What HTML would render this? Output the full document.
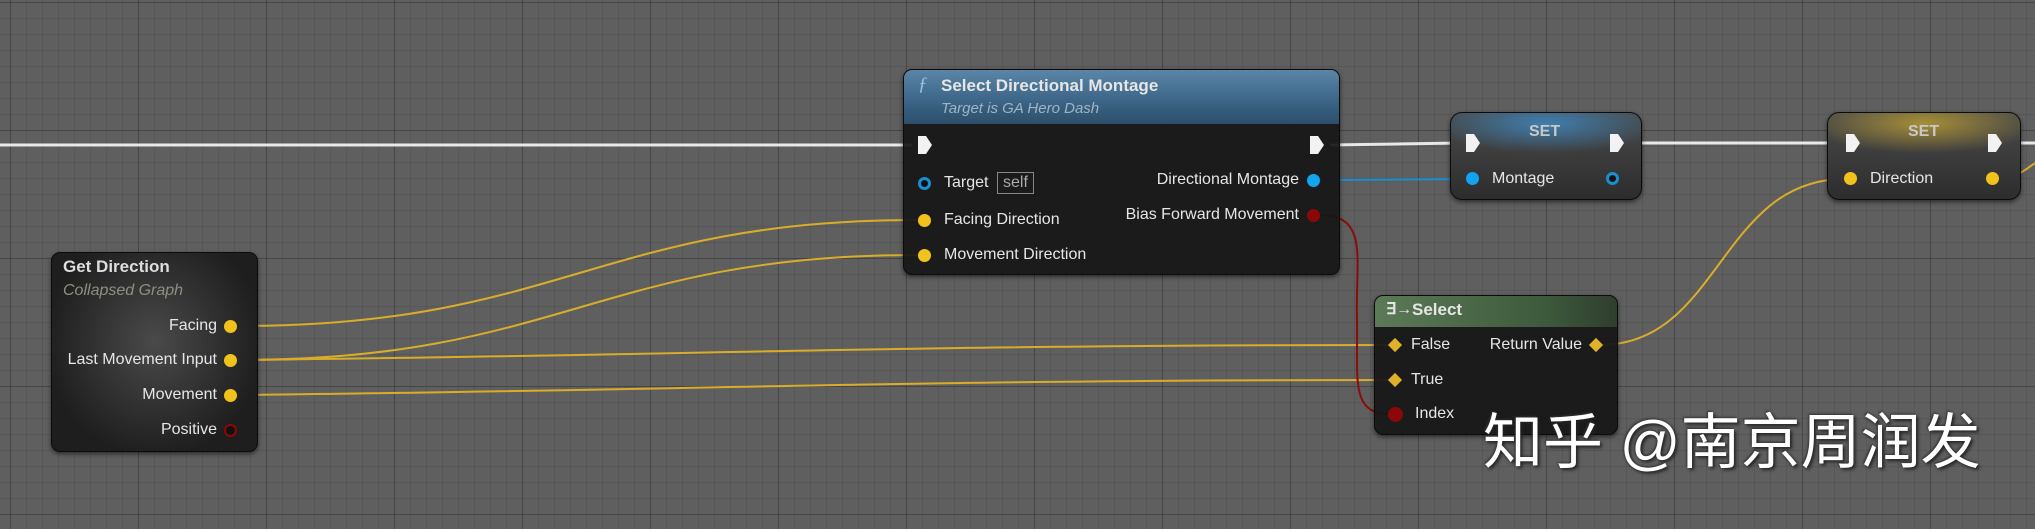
<!DOCTYPE html>
<html><head><meta charset="utf-8"><style>
*{margin:0;padding:0;box-sizing:border-box}
body{width:2035px;height:529px;overflow:hidden;position:relative;font-family:"Liberation Sans",sans-serif;color:#e6e6e6;
background-color:#5f5f5f;
background-image:
linear-gradient(to right,rgba(45,45,45,.4) 1px,transparent 1px),
linear-gradient(to bottom,rgba(45,45,45,.4) 1px,transparent 1px),
linear-gradient(to right,rgba(75,75,75,.4) 1px,transparent 1px),
linear-gradient(to bottom,rgba(75,75,75,.4) 1px,transparent 1px);
background-size:128px 128px,128px 128px,16px 16px,16px 16px;background-position:10px 2px,10px 2px,10px 2px,10px 2px}
svg.w{position:absolute;left:0;top:0}
.n{position:absolute;border-radius:9px;background:rgba(22,22,22,.93);border:1px solid #0b0b0b;box-shadow:0 2px 5px rgba(0,0,0,.55)}
.t{position:absolute;font-size:16px;white-space:nowrap;line-height:18px}
.b{font-weight:bold}
.i{font-style:italic}
.p{position:absolute;width:13px;height:13px;border-radius:50%}
.y{background:#f2c21c}.bl{background:#12a4ef}.r{background:#8c0808}
.d{position:absolute;width:10px;height:10px;background:#e0b22a;transform:rotate(45deg)}
</style></head><body>
<svg class="w" width="2035" height="529">
<g fill="none" stroke-width="2">
<path d="M0 145 L912 145" stroke="#e8e8e8" stroke-width="3"/>
<path d="M1330 145 L1460 143" stroke="#e8e8e8" stroke-width="3"/>
<path d="M1630 143 L1840 143" stroke="#e8e8e8" stroke-width="3"/>
<path d="M2005 143 L2035 143" stroke="#e8e8e8" stroke-width="3"/>
<path d="M238 326 C560 326 600 220 918 220" stroke="#d9ad2a"/>
<path d="M238 360 C560 360 600 255 918 255" stroke="#d9ad2a"/>
<path d="M238 360 C700 355 900 345 1390 345" stroke="#d9ad2a"/>
<path d="M238 395 C700 390 900 380 1390 380" stroke="#d9ad2a"/>
<path d="M1320 180 L1467 179" stroke="#1690d0"/>
<path d="M1320 215 C1370 215 1355 260 1357 320 C1358 380 1350 414 1390 414" stroke="#8a0c0c"/>
<path d="M1600 345 C1720 345 1720 179 1845 179" stroke="#d9ad2a"/>
<path d="M1998 179 C2015 179 2025 170 2035 163" stroke="#d9ad2a"/>
</g></svg>

<!-- Get Direction -->
<div class="n" style="left:51px;top:252px;width:207px;height:200px;background:radial-gradient(ellipse at 50% 45%,#4a4a4a,#1e1e1e 75%)"></div>
<div class="t b" style="left:63px;top:258px;font-size:17px;color:#ddd">Get Direction</div>
<div class="t i" style="left:63px;top:282px;color:#8f8f80">Collapsed Graph</div>
<div class="t" style="right:1818px;top:317px">Facing</div>
<div class="t" style="right:1818px;top:351px">Last Movement Input</div>
<div class="t" style="right:1818px;top:386px">Movement</div>
<div class="t" style="right:1818px;top:421px">Positive</div>
<div class="p y" style="left:224px;top:320px"></div>
<div class="p y" style="left:224px;top:354px"></div>
<div class="p y" style="left:224px;top:389px"></div>
<div class="p" style="left:224px;top:424px;border:2px solid #8c0808;background:#111"></div>

<!-- Select Directional Montage -->
<div class="n" style="left:903px;top:69px;width:437px;height:206px;overflow:hidden">
<div style="height:54px;background:linear-gradient(#5b86a8,#3a6385 60%,#2d4f6b)"></div></div>
<div class="t i" style="left:918px;top:76px;font-size:19px;color:#9cc4e4;font-family:'Liberation Serif',serif">ƒ</div>
<div class="t b" style="left:941px;top:77px;font-size:17px">Select Directional Montage</div>
<div class="t i" style="left:941px;top:100px;color:#9fb4c4;font-size:15px">Target is GA Hero Dash</div>
<div class="p" style="left:918px;top:177px;border:3px solid #1690d0;background:#111"></div>
<div class="t" style="left:944px;top:174px">Target</div>
<div class="t" style="left:997px;top:172px;border:1px solid #888;padding:1px 5px;color:#aaa">self</div>
<div class="p y" style="left:918px;top:214px"></div>
<div class="t" style="left:944px;top:211px">Facing Direction</div>
<div class="p y" style="left:918px;top:249px"></div>
<div class="t" style="left:944px;top:246px">Movement Direction</div>
<div class="t" style="right:736px;top:171px">Directional Montage</div>
<div class="p bl" style="left:1307px;top:174px"></div>
<div class="t" style="right:736px;top:206px">Bias Forward Movement</div>
<div class="p r" style="left:1307px;top:209px"></div>

<!-- SET Montage -->
<div class="n" style="left:1450px;top:112px;width:192px;height:88px;border-radius:12px;background:radial-gradient(ellipse 60% 35% at 50% 12%,rgba(60,140,200,.8),transparent),linear-gradient(#4a4a4a,#2d2d2d)"></div>
<div class="t b" style="left:1529px;top:123px;color:#c8c8c8;font-size:16px">SET</div>
<div class="p bl" style="left:1466px;top:172px"></div>
<div class="t" style="left:1492px;top:170px">Montage</div>
<div class="p" style="left:1606px;top:172px;border:3px solid #1690d0;background:#111"></div>

<!-- SET Direction -->
<div class="n" style="left:1827px;top:112px;width:194px;height:88px;border-radius:12px;background:radial-gradient(ellipse 60% 35% at 50% 12%,rgba(190,160,50,.8),transparent),linear-gradient(#4a4a4a,#2d2d2d)"></div>
<div class="t b" style="left:1908px;top:123px;color:#c8c8c8;font-size:16px">SET</div>
<div class="p y" style="left:1844px;top:172px"></div>
<div class="t" style="left:1870px;top:170px">Direction</div>
<div class="p y" style="left:1986px;top:172px"></div>

<!-- Select -->
<div class="n" style="left:1374px;top:295px;width:244px;height:140px;overflow:hidden">
<div style="height:31px;background:linear-gradient(to right,#5c7a58,#3e5a3c 70%,#2e3e2e)"></div></div>
<div class="t b" style="left:1386px;top:301px;font-size:16px">∃→</div>
<div class="t b" style="left:1412px;top:301px;font-size:17px">Select</div>
<div class="d" style="left:1390px;top:340px"></div>
<div class="t" style="left:1411px;top:336px">False</div>
<div class="d" style="left:1390px;top:375px"></div>
<div class="t" style="left:1411px;top:371px">True</div>
<div class="p r" style="left:1388px;top:407px;width:15px;height:15px"></div>
<div class="t" style="left:1415px;top:405px">Index</div>
<div class="t" style="right:453px;top:336px">Return Value</div>
<div class="d" style="left:1591px;top:340px"></div>

<svg class="w" width="2035" height="529">
<g fill="#f2f2f2">
<path d="M918 136 h8 l6 9 l-6 9 h-8z"/><path d="M1310 136 h8 l6 9 l-6 9 h-8z"/>
<path d="M1466 134 h8 l6 9 l-6 9 h-8z"/><path d="M1610 134 h8 l6 9 l-6 9 h-8z"/>
<path d="M1846 134 h8 l6 9 l-6 9 h-8z"/><path d="M1988 134 h8 l6 9 l-6 9 h-8z"/>
</g></svg>

<div class="t" style="left:1483px;top:409px;font-size:60px;line-height:68px;color:#fff;font-family:'Liberation Sans','Noto Sans CJK SC',sans-serif;text-shadow:2px 2px 3px #222,-1px -1px 2px #333">知乎 @南京周润发</div>
</body></html>
